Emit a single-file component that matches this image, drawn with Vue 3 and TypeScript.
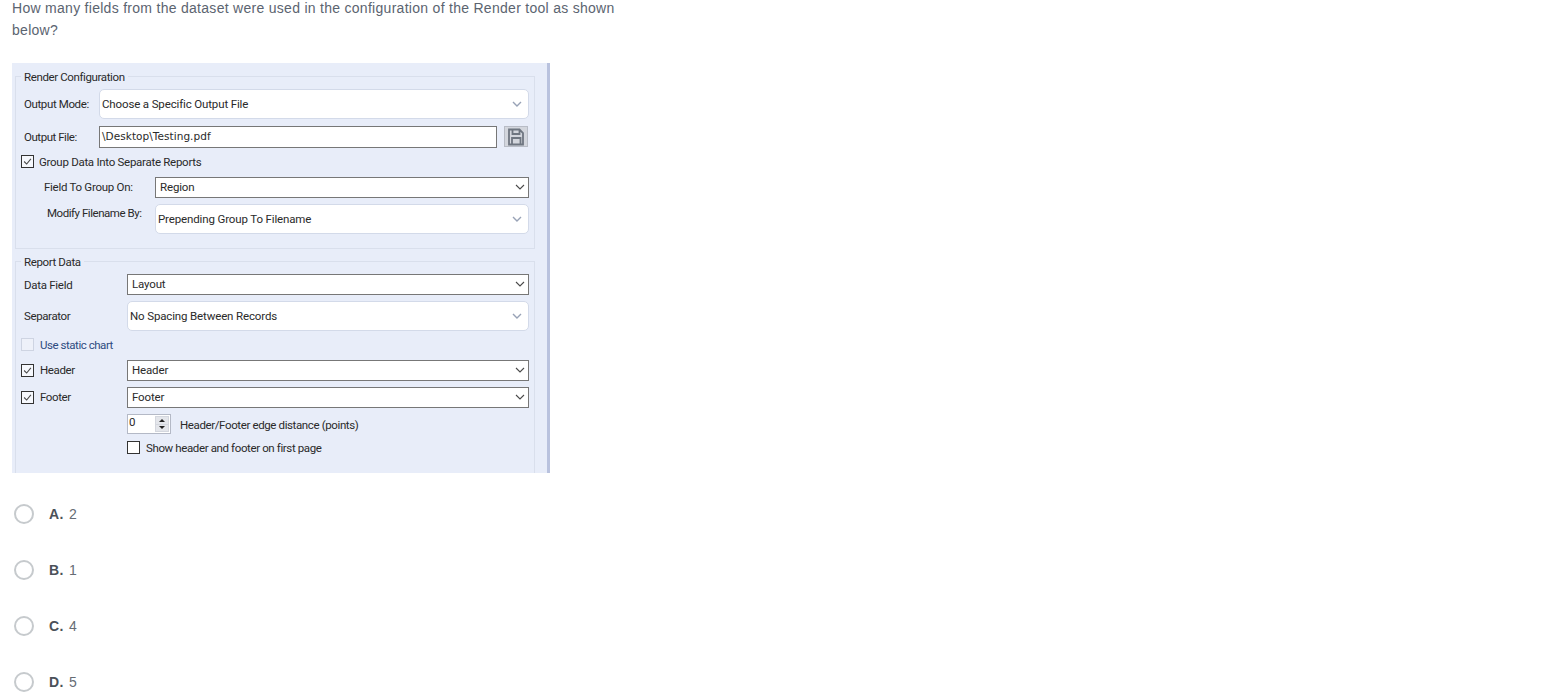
<script setup lang="ts">
const options = [
  { key: 'A.', value: '2' },
  { key: 'B.', value: '1' },
  { key: 'C.', value: '4' },
  { key: 'D.', value: '5' },
]
</script>

<template>
  <main class="page">
    <p class="question">How many fields from the dataset were used in the configuration of the Render tool as shown below?</p>

    <section class="panel">
      <div class="fs fs-top">
        <span class="legend">Render Configuration</span>

        <div class="row h30">
          <span class="label w-mode">Output Mode:</span>
          <div class="select soft w430">
            <span class="val-soft">Choose a Specific Output File</span>
            <svg class="chev" viewBox="0 0 10 6"><path d="M1 1l4 4 4-4" /></svg>
          </div>
        </div>

        <div class="row h22 mt7">
          <span class="label w-mode tight">Output File:</span>
          <div class="input"><span class="mono">\Desktop\Testing.pdf</span></div>
          <button class="save" type="button" aria-label="Save">
            <svg viewBox="0 0 18 18" width="18" height="18">
              <path d="M2 1.5h10.5l3.5 3.5v11.5H2z M5.5 1.5v4.5h7V2.5 M5 16.5v-6.5h8.5v6.5" />
            </svg>
          </button>
        </div>

        <div class="row h13 mt7 check-row">
          <span class="check on"><svg viewBox="0 0 13 13"><path d="M2.5 6.5l3 3 5-6" /></svg></span>
          <span class="text gap5 loose">Group Data Into Separate Reports</span>
        </div>

        <div class="row h21 mt9">
          <span class="label w-group loose">Field To Group On:</span>
          <div class="select hard w374">
            <span class="val-hard">Region</span>
            <svg class="chev dark" viewBox="0 0 10 6"><path d="M1 1l4 4 4-4" /></svg>
          </div>
        </div>

        <div class="row h30 mt6">
          <span class="label w-modify tight">Modify Filename By:</span>
          <div class="select soft w374">
            <span class="val-soft">Prepending Group To Filename</span>
            <svg class="chev" viewBox="0 0 10 6"><path d="M1 1l4 4 4-4" /></svg>
          </div>
        </div>
      </div>

      <div class="fs fs-bottom">
        <span class="legend">Report Data</span>

        <div class="row h21">
          <span class="label w-data loose">Data Field</span>
          <div class="select hard w402">
            <span class="val-hard">Layout</span>
            <svg class="chev dark" viewBox="0 0 10 6"><path d="M1 1l4 4 4-4" /></svg>
          </div>
        </div>

        <div class="row h30 mt6">
          <span class="label w-data">Separator</span>
          <div class="select soft w402">
            <span class="val-soft">No Spacing Between Records</span>
            <svg class="chev" viewBox="0 0 10 6"><path d="M1 1l4 4 4-4" /></svg>
          </div>
        </div>

        <div class="row h13 mt7 check-row">
          <span class="check off"></span>
          <span class="text gap6 link tight">Use static chart</span>
        </div>

        <div class="row h21 mt9 check-row">
          <span class="check on"><svg viewBox="0 0 13 13"><path d="M2.5 6.5l3 3 5-6" /></svg></span>
          <span class="text gap6 w-after">Header</span>
          <div class="select hard w402">
            <span class="val-hard">Header</span>
            <svg class="chev dark" viewBox="0 0 10 6"><path d="M1 1l4 4 4-4" /></svg>
          </div>
        </div>

        <div class="row h21 mt6 check-row">
          <span class="check on"><svg viewBox="0 0 13 13"><path d="M2.5 6.5l3 3 5-6" /></svg></span>
          <span class="text gap6 w-after">Footer</span>
          <div class="select hard w402">
            <span class="val-hard">Footer</span>
            <svg class="chev dark" viewBox="0 0 10 6"><path d="M1 1l4 4 4-4" /></svg>
          </div>
        </div>

        <div class="row h20 mt6 indent">
          <div class="spin">
            <span class="spin-val">0</span>
            <span class="spin-btns">
              <span class="spin-btn"><i class="up"></i></span>
              <span class="spin-btn"><i class="down"></i></span>
            </span>
          </div>
          <span class="text gap9 lower">Header/Footer edge distance (points)</span>
        </div>

        <div class="row h13 mt7 indent">
          <span class="check plain"></span>
          <span class="text gap6">Show header and footer on first page</span>
        </div>
      </div>
    </section>

    <ul class="options">
      <li v-for="o in options" :key="o.key" class="option">
        <span class="radio"></span>
        <span class="opt-text"><b>{{ o.key }}</b> {{ o.value }}</span>
      </li>
    </ul>
  </main>
</template>

<style scoped>
.page {
  height: 695px;
  overflow: hidden;
  padding-left: 12px;
  box-sizing: border-box;
  font-family: "Liberation Sans", Arial, sans-serif;
}
.question {
  margin: -3px 0 0;
  width: 610px;
  font-size: 14px;
  line-height: 22px;
  letter-spacing: 0.285px;
  color: #5b6470;
}
.panel {
  margin-top: 22px;
  width: 538px;
  box-sizing: border-box;
  padding: 13px 0 0 3px;
  background: #e8edf9;
  border-right: 3px solid #b9c2de;
  font-family: Roboto, "Noto Sans", sans-serif;
  font-size: 11.5px;
  letter-spacing: -0.38px;
  color: #2a2a2a;
}
.fs {
  position: relative;
  width: 520px;
  box-sizing: border-box;
  border: 1px solid #d9dfec;
}
.fs-top { padding: 12px 0 14px; }
.fs-bottom {
  margin-top: 12px;
  padding: 12px 0 19px;
  border-bottom: 0;
}
.legend {
  position: absolute;
  left: 5px;
  top: -7px;
  padding: 0 3px;
  line-height: 14px;
  background: #e8edf9;
}
.row { display: flex; align-items: center; }
.h13 { height: 13px; }
.h20 { height: 20px; }
.h21 { height: 21px; }
.h22 { height: 22px; }
.h30 { height: 30px; }
.mt6 { margin-top: 6px; }
.mt7 { margin-top: 7px; }
.mt9 { margin-top: 9px; }
.tight { letter-spacing: -0.46px; }
.loose { letter-spacing: -0.28px; }
.label { box-sizing: border-box; white-space: nowrap; flex: none; }
.w-mode { width: 83px; padding-left: 8px; }
.w-group { width: 139px; padding-left: 28px; padding-bottom: 1px; }
.w-modify { width: 139px; padding-left: 31px; padding-bottom: 12px; }
.w-data { width: 111px; padding-left: 8px; }
.select {
  box-sizing: border-box;
  height: 100%;
  flex: none;
  display: flex;
  align-items: center;
  justify-content: space-between;
  background: #fff;
}
.soft {
  border: 1px solid #d3dae9;
  border-radius: 5px;
  padding: 0 6px 0 2px;
}
.hard {
  border: 1px solid #777;
  padding: 0 3px 1px 4px;
}
.w430 { width: 430px; }
.w402 { width: 402px; }
.w374 { width: 374px; }
.val-soft, .val-hard { white-space: nowrap; }
.val-soft { letter-spacing: -0.14px; }
.val-hard { letter-spacing: -0.15px; }
.chev { width: 10px; height: 6px; fill: none; stroke: #98a2b6; stroke-width: 1.4; }
.chev.dark { stroke: #4a4a4a; stroke-width: 1.1; }
.input {
  box-sizing: border-box;
  width: 398px;
  height: 100%;
  border: 1px solid #777;
  background: #fff;
  padding: 0 0 2px 2px;
  display: flex;
  align-items: center;
}
.mono {
  font-family: "DejaVu Sans", sans-serif;
  font-size: 10.5px;
  letter-spacing: 0.05px;
}
.save {
  box-sizing: border-box;
  width: 24px;
  height: 21px;
  margin: 0 0 1px 7px;
  padding: 0;
  background: #d3d6dd;
  border: 1px solid #b8bcc6;
  display: flex;
  align-items: center;
  justify-content: center;
}
.save svg { fill: none; stroke: #6f7681; stroke-width: 1.8; }
.check-row { padding-left: 5px; }
.check {
  box-sizing: border-box;
  flex: none;
  width: 13px;
  height: 13px;
  border: 1px solid #333;
  background: #f6f8fd;
  display: block;
}
.check svg { display: block; width: 11px; height: 11px; fill: none; stroke: #4a4a4a; stroke-width: 1.3; }
.check.off { border-color: #ced4e2; background: #eef1f9; }
.check.plain { background: #fff; }
.text { white-space: nowrap; }
.gap5 { margin-left: 5px; }
.gap6 { margin-left: 6px; }
.gap9 { margin-left: 9px; }
.lower { padding-top: 1px; }
.link { color: #2d4b80; }
.w-after { width: 87px; flex: none; padding-bottom: 1px; }
.indent { padding-left: 111px; }
.spin {
  box-sizing: border-box;
  width: 44px;
  height: 100%;
  border: 1px solid #b4b9c6;
  background: #fff;
  display: flex;
  justify-content: space-between;
}
.spin-val { padding-left: 1px; line-height: 15px; }
.spin-btns {
  width: 14px;
  margin: 1px;
  display: flex;
  flex-direction: column;
  background: #d4d7de;
  gap: 1px;
  padding: 1px;
  box-sizing: border-box;
}
.spin-btn { flex: 1; display: flex; align-items: center; justify-content: center; background: #e4e6eb; }
.spin-btn i { width: 0; height: 0; border-left: 3px solid transparent; border-right: 3px solid transparent; }
.up { border-bottom: 3px solid #222; }
.down { border-top: 3px solid #222; }
.options { list-style: none; margin: 31px 0 0 2px; padding: 0; }
.option { display: flex; align-items: center; height: 20px; margin-bottom: 36px; }
.radio {
  box-sizing: border-box;
  width: 20px;
  height: 20px;
  border: 2px solid #c6cacd;
  border-radius: 50%;
  background: #fff;
}
.opt-text {
  margin-left: 15px;
  font-size: 14px;
  letter-spacing: 0.4px;
  color: #666c74;
}
.opt-text b { color: #4b5159; margin-right: 1px; }
</style>
